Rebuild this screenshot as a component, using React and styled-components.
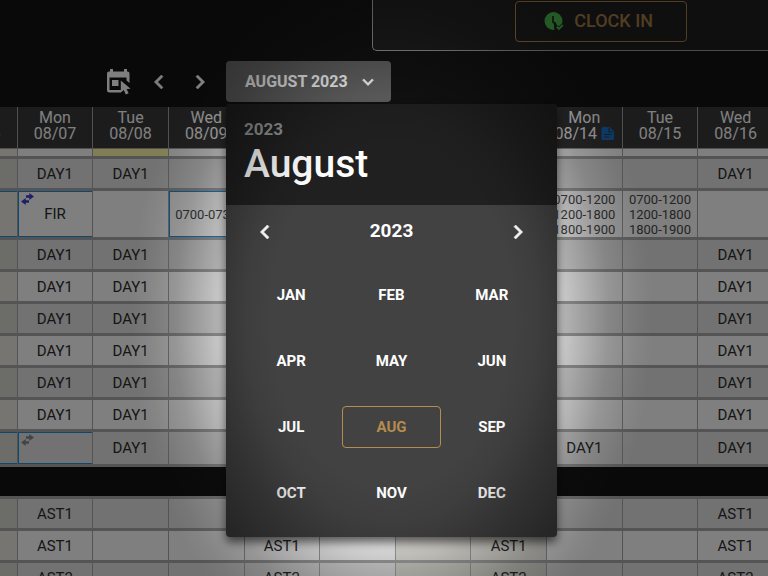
import React from "react";
import styled, { createGlobalStyle, css } from "styled-components";

const gold = "#b58c50";

const GlobalStyle = createGlobalStyle`
  *, *::before, *::after { box-sizing: border-box; }
  body {
    margin: 0;
    background: #121212;
    color: #fff;
    font-family: Roboto, "Liberation Sans", sans-serif;
  }
  button { font-family: inherit; cursor: pointer; }
`;

const Page = styled.main`
  position: relative;
  height: 100vh;
  overflow: hidden;
`;

const TopBar = styled.header`
  display: flex;
  justify-content: flex-end;
`;

const ClockPanel = styled.section`
  flex: 0 0 52%;
  display: flex;
  padding: 1px 0 8px 142px;
  margin-right: -3px;
  background: #1e1e1e;
  border: solid #989898;
  border-width: 0 0 1px 1px;
  border-radius: 0 0 0 5px;
`;

const ClockButton = styled.button`
  display: flex;
  align-items: center;
  justify-content: center;
  gap: 10px;
  width: 172px;
  height: 41px;
  padding: 0 4px 2px 0;
  background: transparent;
  border: 1px solid #a17a45;
  border-radius: 4px;
  color: #a17a45;
  font-size: 18px;
  font-weight: 500;
`;

const Toolbar = styled.nav`
  display: flex;
  align-items: center;
  padding: 10px 0 5px 106px;
`;

const IconButton = styled.button`
  display: flex;
  align-items: center;
  justify-content: center;
  width: ${(p) => p.$width || 41}px;
  height: 41px;
  padding: 0;
  background: none;
  border: 0;
  color: #fff;
`;

const MonthPicker = styled.div`
  position: relative;
  margin-left: 12px;
`;

const MonthToggle = styled.button`
  display: flex;
  align-items: center;
  justify-content: space-between;
  width: 165px;
  height: 41px;
  padding: 0 12px 0 19px;
  background: #646464;
  border: 0;
  border-radius: 4px;
  color: #fff;
  font-size: 16px;
  font-weight: 700;
`;

const Popup = styled.section`
  position: absolute;
  z-index: 2;
  top: 43px;
  left: 0;
  width: 331px;
  overflow: hidden;
  background: #424242;
  border-radius: 4px;
  box-shadow: 0 5px 10px rgba(0, 0, 0, 0.6);
`;

const PopupHead = styled.div`
  height: 101px;
  padding: 15px 18px;
  background: #202020;
`;

const PopupYear = styled.div`
  color: #999;
  font-size: 17px;
  font-weight: 700;
  line-height: 20px;
`;

const PopupMonth = styled.div`
  margin-top: 3px;
  font-size: 39px;
  font-weight: 500;
  line-height: 44px;
`;

const YearBar = styled.div`
  display: flex;
  align-items: center;
  justify-content: space-between;
  height: 57px;
  padding: 0 18px 3px;
`;

const YearLabel = styled.button`
  padding: 0 0 4px;
  background: none;
  border: 0;
  color: #fff;
  font-size: 19px;
  font-weight: 700;
`;

const MonthGrid = styled.div`
  display: grid;
  grid-template-columns: repeat(3, 1fr);
  grid-auto-rows: 66px;
  align-items: center;
  padding: 0 15px 11px;
`;

const MonthButton = styled.button`
  height: 42px;
  margin: 0 1px;
  padding: 0;
  background: none;
  border: 1px solid ${(p) => (p.$selected ? gold : "transparent")};
  border-radius: 4px;
  color: ${(p) => (p.$selected ? gold : "#fff")};
  font-size: 15px;
  font-weight: 700;
`;

const Schedule = styled.table`
  width: calc(100% + 64px);
  margin-left: -58px;
  table-layout: fixed;
  border-collapse: separate;
  border-spacing: 0;
`;

const DayHead = styled.th`
  height: 42px;
  padding: 0 0 4px;
  background: #383838;
  border-right: 1px solid #a0a0a0;
  border-bottom: 1px solid #a0a0a0;
  font-size: 16px;
  font-weight: 400;
  line-height: 16px;
`;

const DateLine = styled.div`
  display: flex;
  align-items: center;
  justify-content: center;
  gap: 4px;
  height: 16px;
`;

const shade = (p) => {
  if (p.$marked) return "#ffffa6";
  if (p.$weekend) return p.$alt ? "#d9d9d1" : "#ecebe4";
  return p.$alt ? "#e4e4e4" : "#ffffff";
};

const Slot = styled.td`
  position: relative;
  height: ${(p) => p.$height}px;
  padding: 0;
  background: ${shade};
  border-right: 1px solid #a8a8a8;
  border-bottom: 3px solid #a8a8a8;
  color: ${(p) => (p.$small ? "#484848" : "#2c2c2c")};
  font-size: ${(p) => (p.$small ? 13 : 15)}px;
  line-height: ${(p) => (p.$small ? 15 : 18)}px;
  text-align: center;
  white-space: pre-line;
  ${(p) =>
    p.$outlined &&
    css`
      box-shadow: inset 1px 1px 0 #1c8ee0, inset 0 -1px 0 #1c8ee0;
    `}
`;

const Divider = styled.td`
  height: 32px;
  padding: 0;
  background: #121212;
  border-bottom: 3px solid #a8a8a8;
`;

const SwapBadge = styled.span`
  position: absolute;
  top: 2px;
  left: 3px;
  display: flex;
  color: ${(p) => (p.$muted ? "#888" : "#3c3ccc")};
`;

const Vignette = styled.div`
  position: absolute;
  z-index: 3;
  inset: 0;
  pointer-events: none;
  background: radial-gradient(
    ellipse 34% 64% at 51% 55%,
    rgba(0, 0, 0, 0) 0%,
    rgba(0, 0, 0, 0) 46%,
    rgba(0, 0, 0, 0.07) 56%,
    rgba(0, 0, 0, 0.25) 69%,
    rgba(0, 0, 0, 0.41) 83%,
    rgba(0, 0, 0, 0.48) 94%,
    rgba(0, 0, 0, 0.5) 100%
  );
`;

const chevrons = {
  left: "M15.41 16.58 10.83 12l4.58-4.59L14 6l-6 6 6 6z",
  right: "M8.59 16.58 13.17 12 8.59 7.41 10 6l6 6-6 6z",
  down: "M7.41 8.58 12 13.17l4.59-4.59L18 10l-6 6-6-6z",
};

const Chevron = ({ dir, size = 28 }) => (
  <svg width={size} height={size} viewBox="0 0 24 24" aria-hidden="true">
    <path d={chevrons[dir]} fill="currentColor" stroke="currentColor" strokeWidth=".5" />
  </svg>
);

const CalendarCursor = () => (
  <svg width="26" height="28" viewBox="0 0 26 28" aria-hidden="true">
    <path
      fill="currentColor"
      fillRule="evenodd"
      d="M4 1h3v2.500h11V1h3v2.500h.5a2 2 0 0 1 2 2V15l-3-2.500V9.500H3.500V22H15v2.500H3.500a2.500 2.500 0 0 1-2.500-2.500V5.500a2 2 0 0 1 2-2h1z"
    />
    <path fill="currentColor" d="M6 12h6.500v6H6zM14.800 12.500v12l3-2.400 2 4.400 2.800-1.200-2-4.300 4-.2z" />
  </svg>
);

const ClockCheck = () => (
  <svg width="20" height="20" viewBox="0 0 20 20" aria-hidden="true">
    <circle cx="9.500" cy="10" r="9" fill="#48b04a" />
    <path d="M9 5v6l3 2" fill="none" stroke="#1e1e1e" strokeWidth="1.600" />
    <path d="m11.500 14.500 3 3L21 12v8h-9z" fill="#1e1e1e" stroke="#1e1e1e" strokeWidth="3" />
    <path d="m12.700 15.700 2.200 2.200 3.900-3.900" fill="none" stroke="#48b04a" strokeWidth="1.900" />
  </svg>
);

const NoteIcon = () => (
  <svg width="13" height="13" viewBox="0 0 13 13" aria-label="Note" role="img">
    <path d="M2 0h6.500L13 4.500V11.500a1.500 1.500 0 0 1-1.500 1.500H2A1.500 1.500 0 0 1 .5 11.500v-10A1.500 1.500 0 0 1 2 0z" fill="#1670c8" />
    <path d="M8 1v4h4M3 7.500h7.500M3 10h5" fill="none" stroke="#383838" strokeWidth="1.200" />
  </svg>
);

const SwapIcon = () => (
  <svg width="13" height="12" viewBox="0 0 13 12" aria-hidden="true">
    <path d="M5 2.200h3.300V0L13 3.500 8.300 7V4.800H5zM8 7.200H4.700V5L0 8.500 4.700 12V9.800H8z" fill="currentColor" />
  </svg>
);

const days = [
  { date: "08/06", weekend: true },
  { name: "Mon", date: "08/07" },
  { name: "Tue", date: "08/08" },
  { name: "Wed", date: "08/09" },
  {},
  {},
  { weekend: true },
  { weekend: true },
  { name: "Mon", date: "08/14", note: true },
  { name: "Tue", date: "08/15" },
  { name: "Wed", date: "08/16" },
];

const split = "0700-1200\n1200-1800\n1800-1900";
const day = { 1: "DAY1", 2: "DAY1", 10: "DAY1" };

const rows = [
  { height: 10, marked: 2, cells: {} },
  { height: 32, alt: true, cells: day },
  {
    height: 49,
    cells: { 1: "FIR", 3: "0700-0730", 8: split, 9: split },
    outlined: [0, 1, 3],
    swap: "active",
  },
  { height: 32, alt: true, cells: day },
  { height: 32, cells: day },
  { height: 32, alt: true, cells: day },
  { height: 32, cells: day },
  { height: 32, alt: true, cells: day },
  { height: 32, cells: day },
  { height: 35, alt: true, cells: { 2: "DAY1", 8: "DAY1", 10: "DAY1" }, outlined: [0, 1], swap: "muted" },
  { divider: true },
  { height: 32, alt: true, cells: { 1: "AST1", 10: "AST1" } },
  { height: 32, cells: { 1: "AST1", 4: "AST1", 7: "AST1", 10: "AST1" } },
  { height: 32, alt: true, cells: { 1: "AST2", 4: "AST2", 7: "AST2", 10: "AST2" } },
];

const months = ["JAN", "FEB", "MAR", "APR", "MAY", "JUN", "JUL", "AUG", "SEP", "OCT", "NOV", "DEC"];

function ScheduleRow({ row }) {
  if (row.divider) {
    return (
      <tr>
        <Divider colSpan={days.length} />
      </tr>
    );
  }
  return (
    <tr>
      {days.map(({ weekend }, i) => {
        const text = row.cells[i] || "";
        return (
          <Slot
            key={i}
            $height={row.height}
            $alt={row.alt}
            $weekend={weekend}
            $marked={row.marked === i}
            $small={text.includes("-")}
            $outlined={row.outlined?.includes(i)}
          >
            {row.swap && i === 1 && (
              <SwapBadge $muted={row.swap === "muted"}>
                <SwapIcon />
              </SwapBadge>
            )}
            {text}
          </Slot>
        );
      })}
    </tr>
  );
}

export default function App() {
  return (
    <Page>
      <GlobalStyle />
      <TopBar>
        <ClockPanel>
          <ClockButton>
            <ClockCheck />
            CLOCK IN
          </ClockButton>
        </ClockPanel>
      </TopBar>
      <Toolbar>
        <IconButton $width={26} aria-label="Go to today">
          <CalendarCursor />
        </IconButton>
        <IconButton $width={54} aria-label="Previous month">
          <Chevron dir="left" />
        </IconButton>
        <IconButton $width={28} aria-label="Next month">
          <Chevron dir="right" />
        </IconButton>
        <MonthPicker>
          <MonthToggle aria-expanded="true">
            AUGUST 2023
            <Chevron dir="down" size={22} />
          </MonthToggle>
          <Popup aria-label="Choose month">
            <PopupHead>
              <PopupYear>2023</PopupYear>
              <PopupMonth>August</PopupMonth>
            </PopupHead>
            <YearBar>
              <IconButton aria-label="Previous year">
                <Chevron dir="left" />
              </IconButton>
              <YearLabel>2023</YearLabel>
              <IconButton aria-label="Next year">
                <Chevron dir="right" />
              </IconButton>
            </YearBar>
            <MonthGrid>
              {months.map((m) => (
                <MonthButton key={m} $selected={m === "AUG"} aria-pressed={m === "AUG"}>
                  {m}
                </MonthButton>
              ))}
            </MonthGrid>
          </Popup>
        </MonthPicker>
      </Toolbar>
      <Schedule>
        <thead>
          <tr>
            {days.map(({ name, date, note }, i) => (
              <DayHead key={i} scope="col">
                <DateLine>{name}</DateLine>
                <DateLine>
                  {date}
                  {note && <NoteIcon />}
                </DateLine>
              </DayHead>
            ))}
          </tr>
        </thead>
        <tbody>
          {rows.map((row, i) => (
            <ScheduleRow key={i} row={row} />
          ))}
        </tbody>
      </Schedule>
      <Vignette />
    </Page>
  );
}
